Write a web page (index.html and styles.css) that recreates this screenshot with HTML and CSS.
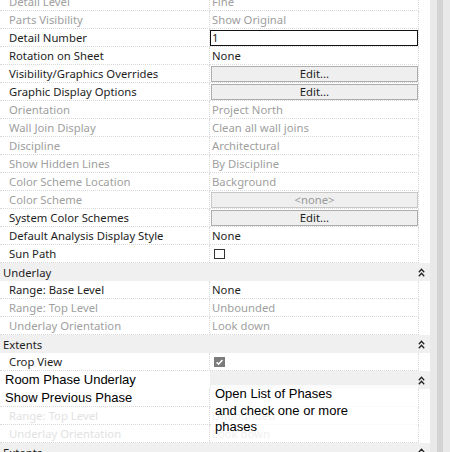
FILE: index.html
```html
<!DOCTYPE html>
<html lang="en">
<head>
<meta charset="UTF-8">
<title>Properties</title>
<link rel="stylesheet" href="styles.css">
</head>
<body>

<div class="panel">
    <div class="grid">
        <div class="row off"><div class="name">Detail Level</div><div class="val">Fine</div></div>
        <div class="row off"><div class="name">Parts Visibility</div><div class="val">Show Original</div></div>
        <div class="row"><div class="name">Detail Number</div><div class="val"><div class="field">1</div></div></div>
        <div class="row"><div class="name">Rotation on Sheet</div><div class="val">None</div></div>
        <div class="row"><div class="name">Visibility/Graphics Overrides</div><div class="val"><div class="btn">Edit...</div></div></div>
        <div class="row"><div class="name">Graphic Display Options</div><div class="val"><div class="btn">Edit...</div></div></div>
        <div class="row off"><div class="name">Orientation</div><div class="val">Project North</div></div>
        <div class="row off"><div class="name">Wall Join Display</div><div class="val">Clean all wall joins</div></div>
        <div class="row off"><div class="name">Discipline</div><div class="val">Architectural</div></div>
        <div class="row off"><div class="name">Show Hidden Lines</div><div class="val">By Discipline</div></div>
        <div class="row off"><div class="name">Color Scheme Location</div><div class="val">Background</div></div>
        <div class="row off"><div class="name">Color Scheme</div><div class="val"><div class="btn">&lt;none&gt;</div></div></div>
        <div class="row"><div class="name">System Color Schemes</div><div class="val"><div class="btn">Edit...</div></div></div>
        <div class="row"><div class="name">Default Analysis Display Style</div><div class="val">None</div></div>
        <div class="row"><div class="name">Sun Path</div><div class="val"><span class="check"></span></div></div>

        <div class="group">Underlay<svg class="fold" width="7" height="9" viewBox="0 0 7 9"><polyline points="0.8,4.2 3.5,1.3 6.2,4.2"/><polyline points="0.8,8.2 3.5,5.3 6.2,8.2"/></svg></div>
        <div class="row"><div class="name">Range: Base Level</div><div class="val">None</div></div>
        <div class="row off"><div class="name">Range: Top Level</div><div class="val">Unbounded</div></div>
        <div class="row off"><div class="name">Underlay Orientation</div><div class="val">Look down</div></div>

        <div class="group">Extents<svg class="fold" width="7" height="9" viewBox="0 0 7 9"><polyline points="0.8,4.2 3.5,1.3 6.2,4.2"/><polyline points="0.8,8.2 3.5,5.3 6.2,8.2"/></svg></div>
        <div class="row"><div class="name">Crop View</div><div class="val"><span class="check on"><svg width="11" height="10" viewBox="0 0 11 10"><polyline points="2.6,5.2 4.6,7.2 8.4,3"/></svg></span></div></div>

        <div class="group note"><span class="tag">Room Phase Underlay</span><svg class="fold" width="7" height="9" viewBox="0 0 7 9"><polyline points="0.8,4.2 3.5,1.3 6.2,4.2"/><polyline points="0.8,8.2 3.5,5.3 6.2,8.2"/></svg></div>
        <div class="phases">
            <div class="row"><div class="name big">Show Previous Phase</div><div class="val"></div></div>
            <div class="row ghost"><div class="name">Range: Top Level</div><div class="val">Unbounded</div></div>
            <div class="row ghost"><div class="name">Underlay Orientation</div><div class="val">Look down</div></div>
            <div class="callout">Open List of Phases<br>and check one or more<br>phases</div>
        </div>

        <div class="group">Extents<svg class="fold" width="7" height="9" viewBox="0 0 7 9"><polyline points="0.8,4.2 3.5,1.3 6.2,4.2"/><polyline points="0.8,8.2 3.5,5.3 6.2,8.2"/></svg></div>
    </div>
    <div class="scrollbar"><div class="track"></div></div>
</div>

</body>
</html>
```

FILE: styles.css
```css
/* Revit style properties palette */
body {
    margin: 0;
    padding: 0;
    background-color: #fff;
    font-family: "Noto Sans", "Open Sans", sans-serif;
    font-size: 11.3px;
    color: #1e1e1e;
    overflow: hidden;
    height: 452px;
}

.panel {
    display: flex;
    margin-top: -7px;
}

.grid {
    width: 430px;
}

.row {
    display: grid;
    grid-template-columns: 210px 209px 11px;
    height: 18px;
    line-height: 17px;
}

.row::after {
    content: "";
}

.name {
    padding-left: 9px;
    border-right: 1px dotted #d9d9d9;
    border-bottom: 1px dotted #d9d9d9;
    white-space: nowrap;
    overflow: hidden;
}

.val {
    padding-left: 2px;
    border-right: 1px dotted #d9d9d9;
    border-bottom: 1px dotted #d9d9d9;
    white-space: nowrap;
    overflow: hidden;
}

.off .name,
.off .val {
    color: #a0a0a0;
}

.field {
    margin: 1px 0 0 -2px;
    height: 16px;
    border: 1px solid #111;
    box-sizing: border-box;
    line-height: 14px;
    padding-left: 1px;
    background: #fff;
}

.btn {
    margin: 1px 0 0 -1px;
    width: 207px;
    height: 16px;
    box-sizing: border-box;
    border: 1px solid #adadad;
    background-color: #efefef;
    text-align: center;
    line-height: 14px;
    color: #1e1e1e;
}

.off .btn {
    border-color: #c8c8c8;
    color: #9a9a9a;
}

.check {
    display: inline-block;
    width: 11px;
    height: 10px;
    margin: 4px 0 0 2px;
    box-sizing: border-box;
    border: 1px solid #333;
    vertical-align: top;
}

.check.on {
    border: none;
    background-color: #7b7b7b;
}

.check svg {
    display: block;
}

.check polyline {
    fill: none;
    stroke: #fff;
    stroke-width: 1.6;
}

.group {
    display: flex;
    align-items: center;
    height: 18px;
    padding-left: 3px;
    background-color: #f0f0f0;
    color: #1e1e1e;
}

.fold {
    margin-left: auto;
    margin-right: 5px;
}

.fold polyline {
    fill: none;
    stroke: #222;
    stroke-width: 1.3;
}

.note {
    padding-left: 0;
}

.note .tag {
    width: 205px;
    height: 18px;
    padding-left: 5px;
    background-color: #fff;
    font-family: "Liberation Sans", Arial, sans-serif;
    font-size: 13px;
    line-height: 17px;
    color: #000;
}

.big {
    padding-left: 5px;
    font-family: "Liberation Sans", Arial, sans-serif;
    font-size: 13px;
    color: #000;
}

.ghost .name {
    color: #e2e2e2;
}

.ghost .val {
    color: #c4c4c4;
}

.phases {
    position: relative;
}

.callout {
    position: absolute;
    top: -4px;
    left: 211px;
    width: 207px;
    height: 55px;
    padding: 1px 0 0 4px;
    box-sizing: border-box;
    background-color: rgba(255, 255, 255, 0.72);
    font-family: "Liberation Sans", Arial, sans-serif;
    font-size: 13px;
    line-height: 16.5px;
    color: #000;
}

.scrollbar {
    width: 20px;
    height: 470px;
    background-color: #e9e9e9;
}

.track {
    width: 6px;
    height: 100%;
    margin-left: 7px;
    background-color: #d3d3d3;
}
```
